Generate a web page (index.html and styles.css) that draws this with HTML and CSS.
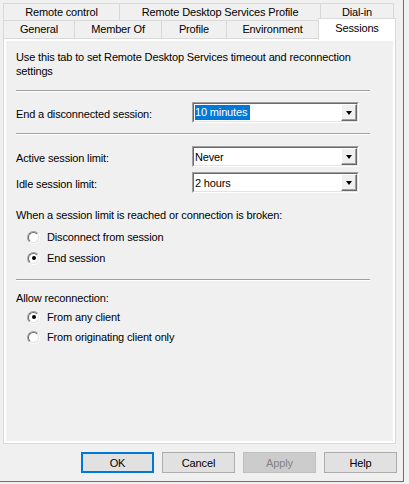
FILE: index.html
```html
<!DOCTYPE html>
<html>
<head>
<meta charset="utf-8">
<link rel="stylesheet" href="styles.css">
</head>
<body>
<div class="dialog">
  <div class="tabs">
    <div class="tabrow back">
      <div class="tab w-remote">Remote control</div>
      <div class="tab w-rdsp">Remote Desktop Services Profile</div>
      <div class="tab w-dial">Dial-in</div>
    </div>
    <div class="tabrow front">
      <div class="tab w-general">General</div>
      <div class="tab w-member">Member Of</div>
      <div class="tab w-profile">Profile</div>
      <div class="tab w-env">Environment</div>
      <div class="tab selected">Sessions</div>
    </div>
  </div>
  <div class="panel">
    <p class="desc">Use this tab to set Remote Desktop Services timeout and reconnection settings</p>
    <div class="sep sep1"></div>
    <div class="field f-end">
      <span class="label">End a disconnected session:</span>
      <div class="combo"><span class="value"><span class="highlight">10 minutes</span></span><span class="drop"><span class="tri"></span></span></div>
    </div>
    <div class="sep sep2"></div>
    <div class="field f-active">
      <span class="label">Active session limit:</span>
      <div class="combo"><span class="value">Never</span><span class="drop"><span class="tri"></span></span></div>
    </div>
    <div class="field f-idle">
      <span class="label">Idle session limit:</span>
      <div class="combo"><span class="value">2 hours</span><span class="drop"><span class="tri"></span></span></div>
    </div>
    <p class="text t-when">When a session limit is reached or connection is broken:</p>
    <div class="radio r1"><span class="rb"><span class="rbi"></span></span>Disconnect from session</div>
    <div class="radio r2"><span class="rb"><span class="rbi checked"></span></span>End session</div>
    <div class="sep sep3"></div>
    <p class="text t-allow">Allow reconnection:</p>
    <div class="radio r3"><span class="rb"><span class="rbi checked"></span></span>From any client</div>
    <div class="radio r4"><span class="rb"><span class="rbi"></span></span>From originating client only</div>
  </div>
  <div class="buttons">
    <div class="btn default">OK</div>
    <div class="btn">Cancel</div>
    <div class="btn disabled">Apply</div>
    <div class="btn">Help</div>
  </div>
</div>
</body>
</html>
```
FILE: styles.css
```css
html, body {
  margin: 0;
  padding: 0;
  background: #f0f0f0;
}
body {
  font-family: "Liberation Sans", Arial, sans-serif;
  font-size: 11px;
  letter-spacing: -0.15px;
  color: #000;
}
.dialog {
  width: 400px;
  height: 478px;
  padding: 3px 0 0 3px;
  border-right: 1px solid #707070;
  border-bottom: 1px solid #707070;
  background: #f0f0f0;
}
.tabs {
  display: flex;
  flex-direction: column;
}
.tabrow {
  display: flex;
}
.tab {
  box-sizing: border-box;
  border: 1px solid #d9d9d9;
  border-bottom: none;
  background: #f0f0f0;
  margin-left: -1px;
  display: flex;
  align-items: center;
  justify-content: center;
  white-space: nowrap;
}
.tab:first-child { margin-left: 0; }
.back .tab { height: 17px; padding-bottom: 1px; }
.front .tab { height: 18px; padding-bottom: 1px; }
.w-remote { width: 117px; }
.w-rdsp { width: 202px; }
.w-dial { width: 74px; }
.w-general { width: 72px; }
.w-member { width: 88px; }
.w-profile { width: 66px; }
.w-env { width: 93px; }
.front .tab.selected {
  width: 78px;
  height: 22px;
  margin-top: -2px;
  margin-bottom: -2px;
  background: #fff;
  position: relative;
  z-index: 1;
  padding-bottom: 3px;
}
.panel {
  box-sizing: border-box;
  width: 393px;
  height: 406px;
  border: 1px solid #d9d9d9;
  box-shadow: inset 0 0 0 2px #fff;
  padding: 11px 0 0 12px;
  display: flex;
  flex-direction: column;
}
.desc, .text {
  margin: 0;
  line-height: 14px;
}
.desc { width: 360px; }
.sep {
  width: 354px;
  height: 0;
  border-top: 1px solid #a0a0a0;
  border-bottom: 1px solid #fff;
}
.sep1 { margin-top: 12px; }
.sep2 { margin-top: 10px; }
.sep3 { margin-top: 13px; }
.field {
  display: flex;
  align-items: center;
}
.f-end { margin-top: 10px; }
.f-active { margin-top: 11px; }
.f-idle { margin-top: 5px; }
.label {
  width: 176px;
  padding-top: 2px;
}
.combo {
  box-sizing: border-box;
  width: 167px;
  height: 21px;
  border-style: solid;
  border-width: 1px;
  border-color: #a0a0a0 #fff #fff #a0a0a0;
  display: flex;
  background: #fff;
}
.combo > .value {
  flex: 1;
  border-style: solid;
  border-width: 1px 0 1px 1px;
  border-color: #696969 transparent #e3e3e3 #696969;
  display: flex;
  align-items: center;
  padding-left: 1px;
  white-space: nowrap;
}
.highlight {
  background: #0078d7;
  color: #fff;
  line-height: 15px;
  padding-right: 3px;
}
.drop {
  box-sizing: border-box;
  width: 17px;
  border-style: solid;
  border-width: 1px 1px 1px 0;
  border-color: #696969 #e3e3e3 #e3e3e3 transparent;
  display: flex;
}
.tri {
  flex: 1;
  display: flex;
  align-items: center;
  justify-content: center;
  background: #f0f0f0;
  border-style: solid;
  border-width: 1px;
  border-color: #fff #696969 #696969 #fff;
  box-shadow: inset -1px -1px 0 #a0a0a0;
}
.tri::after {
  content: "";
  width: 0;
  height: 0;
  border-left: 3.5px solid transparent;
  border-right: 3.5px solid transparent;
  border-top: 4px solid #000;
  margin-top: 1px;
}
.t-when { margin-top: 15px; }
.t-allow { margin-top: 10px; }
.radio {
  display: flex;
  align-items: center;
  height: 16px;
  padding-left: 11px;
}
.r1 { margin-top: 7px; }
.r2 { margin-top: 5px; }
.r3 { margin-top: 4px; }
.r4 { margin-top: 4px; }
.rb {
  box-sizing: border-box;
  width: 13px;
  height: 13px;
  border-radius: 50%;
  border: 1px solid;
  border-color: #a0a0a0 #fff #fff #a0a0a0;
  margin-right: 7px;
  display: flex;
}
.rbi {
  flex: 1;
  border-radius: 50%;
  border: 1px solid;
  border-color: #696969 #e3e3e3 #e3e3e3 #696969;
  background: #fff;
  display: flex;
  align-items: center;
  justify-content: center;
}
.rbi.checked::after {
  content: "";
  width: 4px;
  height: 4px;
  border-radius: 50%;
  background: #000;
}
.buttons {
  display: flex;
  justify-content: flex-end;
  gap: 8px;
  margin-top: 8px;
  padding-right: 6px;
}
.btn {
  box-sizing: border-box;
  width: 73px;
  height: 21px;
  border: 1px solid #adadad;
  background: #e1e1e1;
  display: flex;
  align-items: center;
  justify-content: center;
}
.btn.default {
  border: 2px solid #0078d7;
}
.btn.disabled {
  background: #cccccc;
  border-color: #bfbfbf;
  color: #838383;
}
```
